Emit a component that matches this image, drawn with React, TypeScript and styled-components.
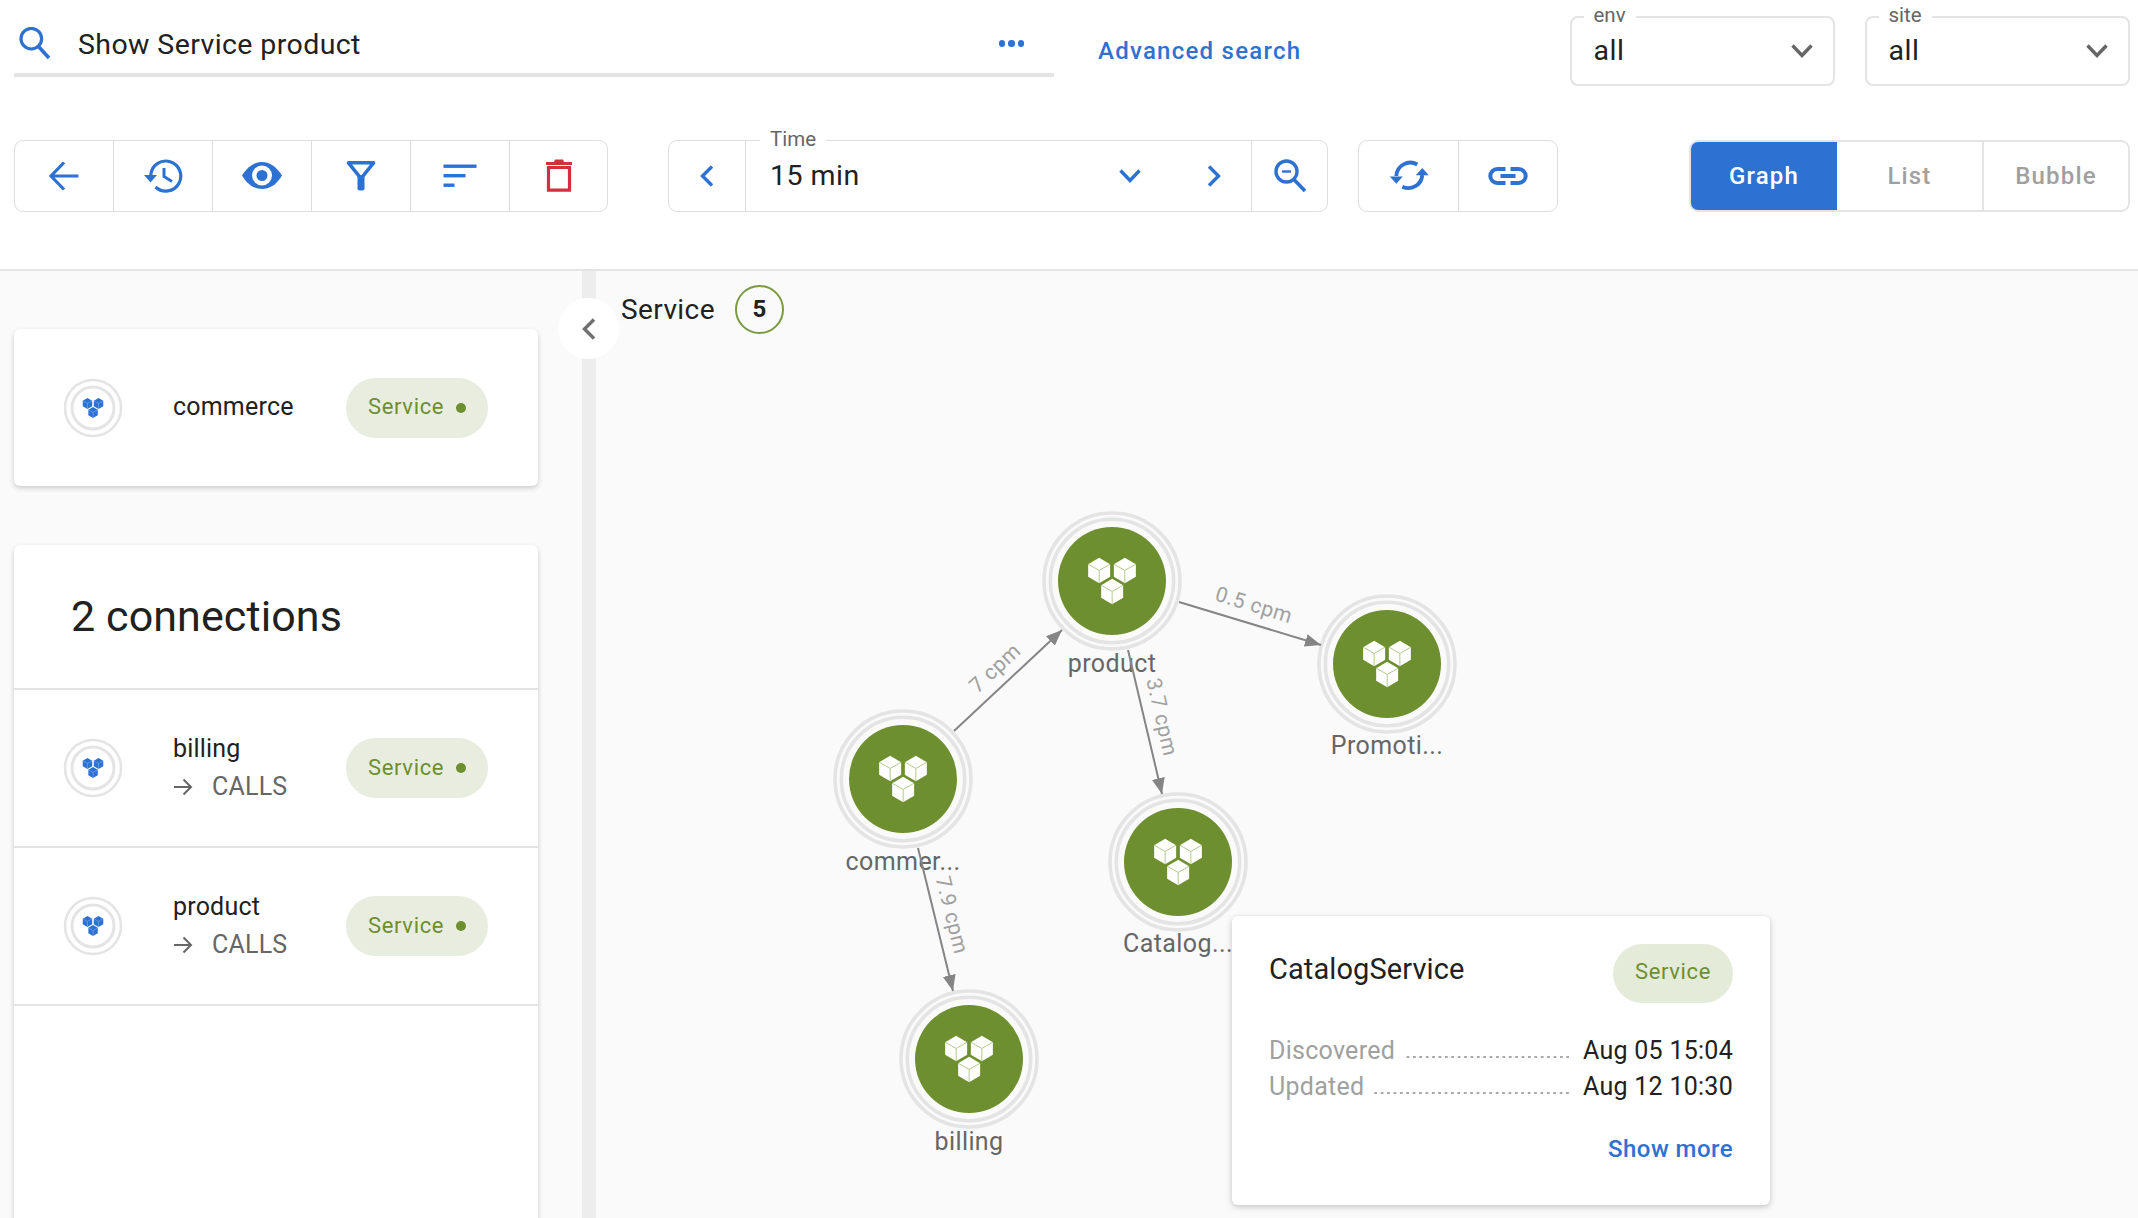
import React from "react";
import styled, { createGlobalStyle } from "styled-components";

const BLUE = "#2d72d2";
const GREEN = "#6d8f2f";
const RED = "#d32f3c";
const LINE = "#e4e4e4";

const Global = createGlobalStyle`
  html, body { margin: 0; padding: 0; background: #fff; }
  body { font-family: Roboto, "Liberation Sans", sans-serif; color: #212121; }
  #root { width: 2138px; height: 1218px; overflow: hidden; }
`;

const Page = styled.div`
  width: 2138px; height: 1218px; display: flex; flex-direction: column; overflow: hidden;
`;
const Header = styled.header`
  height: 271px; flex: none; padding: 0 8px 0 14px; box-sizing: border-box;
  border-bottom: 2px solid ${LINE};
`;
const TopRow = styled.div`
  height: 140px; display: flex; align-items: flex-start;
`;
const SearchBox = styled.div`
  width: 1040px; height: 77px; box-sizing: border-box; border-bottom: 4px solid ${LINE};
  display: flex; align-items: flex-start; padding: 27px 0 0 5px;
`;
const SearchText = styled.div`
  flex: 1; margin: 1px 0 0 27px; font-size: 28.5px; line-height: 34px; letter-spacing: 0.4px;
`;
const More = styled.div`
  display: flex; gap: 3px; margin: 13px 30px 0 0;
`;
const MoreDot = styled.span`
  width: 6.5px; height: 6.5px; border-radius: 50%; background: ${BLUE};
`;
const AdvLink = styled.a`
  margin: 34px 0 0 44px; font-size: 24px; line-height: 34px; font-weight: 500; letter-spacing: 1.25px; color: ${BLUE};
`;
const Selects = styled.div`
  margin: 0 0.5px 0 auto; display: flex; gap: 30px; padding-top: 16px;
`;
const SelectBox = styled.div`
  position: relative; width: 265px; height: 70px; box-sizing: border-box;
  border: 2px solid ${LINE}; border-radius: 8px; display: flex; align-items: center;
  justify-content: space-between; padding: 0 11px 0 22px;
`;
const FloatLabel = styled.span<{ $left: number; $top: number }>`
  position: absolute; left: ${p => p.$left}px; top: ${p => p.$top}px; padding: 0 10px; background: #fff;
  font-size: 20.5px; line-height: 24px; color: #666;
`;
const SelectValue = styled.span`
  font-size: 28.5px; line-height: 34px; letter-spacing: 0.5px;
`;
const ToolRow = styled.div`
  display: flex; height: 72px;
`;
const Group = styled.div<{ $ml: number }>`
  position: relative; display: flex; height: 72px; box-sizing: border-box; margin-left: ${p => p.$ml}px;
  border: 1px solid #dedede; border-radius: 9px; background: #fff;
`;
const Cell = styled.div<{ $w: number }>`
  width: ${p => p.$w}px; flex: none; box-sizing: border-box; display: flex; align-items: center; justify-content: center;
  & + & { border-left: 1px solid #dcdcdc; }
`;
const TimeCell = styled.div`
  width: 431px; flex: none; box-sizing: border-box; border-left: 1px solid #dcdcdc; display: flex;
  align-items: center; justify-content: space-between; padding: 0 26px 0 24px;
`;
const Tabs = styled.div`
  margin-left: auto; width: 441px; height: 72px; box-sizing: border-box; display: flex;
  border: 2px solid ${LINE}; border-radius: 9px; overflow: hidden;
`;
const Tab = styled.div<{ $active?: boolean; $divided?: boolean; $w: number }>`
  flex: none; box-sizing: border-box; width: ${p => p.$w}px; display: flex; align-items: center; justify-content: center;
  font-size: 24px; font-weight: 500; letter-spacing: 1.15px;
  background: ${p => (p.$active ? BLUE : "#fff")}; color: ${p => (p.$active ? "#fff" : "#a0a0a0")};
  border-left: ${p => (p.$divided ? `2px solid ${LINE}` : "none")};
`;

const Body = styled.main`
  flex: 1; min-height: 0; display: flex; background: #fafafa;
`;
const Sidebar = styled.aside`
  width: 582px; flex: none; box-sizing: border-box; padding: 58px 44px 0 14px; display: flex;
  flex-direction: column; gap: 59px;
`;
const Card = styled.section`
  background: #fff; border-radius: 6px; box-shadow: 0 2px 5px rgba(0,0,0,.2);
`;
const ConnCard = styled(Card)`
  flex: 1; margin-bottom: -8px;
`;
const ConnTitle = styled.h2`
  margin: 0; height: 145px; box-sizing: border-box; border-bottom: 2px solid ${LINE}; display: flex;
  align-items: center; padding: 0 0 2px 57px; font-size: 43px; font-weight: 400; letter-spacing: 0.1px; color: #212121;
`;
const Row = styled.div<{ $h: number; $line?: boolean }>`
  height: ${p => p.$h}px; box-sizing: border-box; display: flex; align-items: center; padding: 0 50px 0 49px;
  border-bottom: ${p => (p.$line ? `2px solid ${LINE}` : "none")};
`;
const RowText = styled.div<{ $lift: number }>`
  flex: 1; margin: ${p => p.$lift}px 0 0 50px; min-width: 0; display: flex; flex-direction: column; gap: 8px;
`;
const RowName = styled.div`
  font-size: 25px; line-height: 30px; letter-spacing: 0.2px;
`;
const Relation = styled.div`
  display: flex; align-items: center; gap: 19px; font-size: 25px; line-height: 30px; letter-spacing: 0.2px; color: #666;
`;
const Chip = styled.div`
  flex: none; width: 142px; height: 60px; box-sizing: border-box; border-radius: 30px; background: #e9ede0; padding: 0 0 2px 22px;
  display: flex; align-items: center; gap: 12px; font-size: 22px; letter-spacing: 0.65px; color: ${GREEN};
`;
const ChipDot = styled.span`
  width: 10px; height: 10px; margin-top: 2px; border-radius: 50%; background: ${GREEN};
`;
const Strip = styled.div`
  position: relative; width: 14px; flex: none; background: #ededed;
`;
const Collapse = styled.div`
  position: absolute; left: -24px; top: 27px; width: 61px; height: 61px; border-radius: 50%; background: #fff;
  display: flex; align-items: center; justify-content: center; z-index: 2;
`;
const Canvas = styled.div`
  position: relative; flex: 1; min-width: 0; overflow: hidden;
`;
const Heading = styled.div`
  position: relative; z-index: 1; display: flex; align-items: center; gap: 20px; padding: 14px 0 0 25px;
  font-size: 28px; line-height: 49px; letter-spacing: 0.4px;
`;
const Count = styled.span`
  width: 49px; height: 49px; box-sizing: border-box; border: 2.5px solid #7a9a42; border-radius: 50%;
  display: flex; align-items: center; justify-content: center; font-size: 24px; font-weight: 700; letter-spacing: 0;
`;
const GraphSvg = styled.svg`
  position: absolute; left: 0; top: 0;
`;
const NodeLabel = styled.text`
  font-family: Roboto, sans-serif; font-size: 25px; fill: #666; text-anchor: middle; letter-spacing: 0.4px;
`;
const EdgeLabel = styled.text`
  font-family: Roboto, sans-serif; font-size: 21px; fill: #a0a0a0; text-anchor: middle; letter-spacing: 0.55px;
`;
const Tip = styled.div`
  position: absolute; left: 636px; top: 645px; width: 538px; height: 289px; box-sizing: border-box; padding: 28px 37px 0 37px;
  background: #fff; border-radius: 6px; box-shadow: 0 2px 6px rgba(0,0,0,.22); z-index: 3;
`;
const TipHead = styled.div`
  display: flex; justify-content: space-between; align-items: flex-start;
`;
const TipTitle = styled.div`
  margin-top: 8px; font-size: 29px; line-height: 34px; letter-spacing: 0.1px;
`;
const TipChip = styled.div`
  width: 120px; height: 59px; box-sizing: border-box; padding-bottom: 4px; border-radius: 30px; background: #e5ebd9; display: flex; align-items: center; justify-content: center;
  font-size: 22px; letter-spacing: 0.65px; color: ${GREEN};
`;
const TipRows = styled.div`
  margin-top: 29px;
`;
const TipRow = styled.div`
  height: 36px; display: flex; align-items: center; font-size: 25px; letter-spacing: 0.27px;
`;
const TipKey = styled.span`
  color: #a0a0a0; flex: none;
`;
const Leader = styled.span`
  flex: 1; min-width: 0; align-self: stretch; margin: 0 12px 0 10px;
  background-image: radial-gradient(circle at center, #a8a8a8 1.1px, transparent 1.5px);
  background-size: 6.4px 6px; background-position: right top 22px; background-repeat: repeat-x;
`;
const TipValue = styled.span`
  flex: none;
`;
const TipMore = styled.a`
  display: block; margin-top: 30px; text-align: right; font-size: 24px; line-height: 30px; font-weight: 500; letter-spacing: 0.45px; color: ${BLUE};
`;
const IconSvg = styled.svg`
  display: block; flex: none;
`;

const Ico: React.FC<{ s?: number; children: React.ReactNode }> = ({ s = 40, children }) => (
  <IconSvg width={s} height={s} viewBox="0 0 40 40" fill="none">{children}</IconSvg>
);

const Chevron: React.FC<{ dir: "l" | "r" | "d"; color?: string }> = ({ dir, color = BLUE }) => {
  const d = dir === "l" ? "M25 10.5 L15.5 20 L25 29.5" : dir === "r" ? "M15 10.5 L24.5 20 L15 29.5" : "M10.5 14.5 L20 24.5 L29.5 14.5";
  return <Ico><path d={d} stroke={color} strokeWidth={3.4} /></Ico>;
};

const Cube: React.FC<{ x: number; y: number; fill: string; line: string; sw: number }> = ({ x, y, fill, line, sw }) => (
  <g transform={`translate(${x} ${y})`}>
    <path d="M11 0 L22 6.3 V19 L11 25.3 L0 19 V6.3Z" fill={fill} />
    <path d="M0 6.3 L11 12.6 L22 6.3 M11 12.6 V25.3" stroke={line} strokeWidth={sw} fill="none" />
  </g>
);
const Cubes: React.FC<{ cx: number; cy: number; k: number; fill: string; line: string; sw: number }> = ({ cx, cy, k, fill, line, sw }) => (
  <g transform={`translate(${cx} ${cy}) scale(${k}) translate(-23.85 -23.15)`}>
    <Cube x={0} y={0} fill={fill} line={line} sw={sw} />
    <Cube x={25.7} y={0} fill={fill} line={line} sw={sw} />
    <Cube x={13} y={21} fill={fill} line={line} sw={sw} />
  </g>
);

const EntityIcon = () => (
  <IconSvg width={60} height={60} viewBox="0 0 60 60" fill="none">
    <circle cx="30" cy="30" r="28" stroke="#e4e4e4" strokeWidth="2.5" />
    <circle cx="30" cy="30" r="21" stroke="#e4e4e4" strokeWidth="3" />
    <Cubes cx={30} cy={30} k={0.43} fill={BLUE} line="#8fb6ec" sw={1.2} />
  </IconSvg>
);

const Badge: React.FC = () => (
  <Chip>Service<ChipDot /></Chip>
);

const ArrowRight = () => (
  <IconSvg width={20} height={20} viewBox="0 0 20 20" fill="none">
    <path d="M1 10 H18 M10.5 2.5 L18 10 L10.5 17.5" stroke="#666" strokeWidth="2" />
  </IconSvg>
);

const nodes = [
  { x: 1112, y: 581, label: "product", ly: 672 },
  { x: 1387, y: 664, label: "Promoti...", ly: 754 },
  { x: 903, y: 779, label: "commer...", ly: 870 },
  { x: 1178, y: 862, label: "Catalog...", ly: 952 },
  { x: 969, y: 1059, label: "billing", ly: 1150 },
];
const edges = [
  { d: "M954 731 L1062 630" },
  { d: "M1179 602 L1321 645" },
  { d: "M1128 650 L1162 794" },
  { d: "M918 848 L953 991" },
];
const edgeLabels = [
  { t: "7 cpm", x: 995, y: 675, r: -43, cx: 995, cy: 668 },
  { t: "0.5 cpm", x: 1254, y: 612, r: 17, cx: 1254, cy: 605 },
  { t: "3.7 cpm", x: 1162, y: 724, r: 77, cx: 1162, cy: 717 },
  { t: "7.9 cpm", x: 952, y: 922, r: 76, cx: 952, cy: 915 },
];

const SearchIcon = () => (
  <IconSvg width={32} height={32} viewBox="0 0 32 32" fill="none">
    <circle cx="12.3" cy="11.7" r="10.3" stroke={BLUE} strokeWidth="3.2" />
    <path d="M19.5 19.5 L30 31" stroke={BLUE} strokeWidth="3.6" />
  </IconSvg>
);

const rows = [
  { name: "billing" },
  { name: "product" },
];

export default function App() {
  return (
    <Page>
      <Global />
      <Header>
        <TopRow>
          <SearchBox>
            <SearchIcon />
            <SearchText>Show Service product</SearchText>
            <More><MoreDot /><MoreDot /><MoreDot /></More>
          </SearchBox>
          <AdvLink>Advanced search</AdvLink>
          <Selects>
            <SelectBox>
              <FloatLabel $left={12} $top={-15}>env</FloatLabel>
              <SelectValue>all</SelectValue>
              <Chevron dir="d" color="#666" />
            </SelectBox>
            <SelectBox>
              <FloatLabel $left={12} $top={-15}>site</FloatLabel>
              <SelectValue>all</SelectValue>
              <Chevron dir="d" color="#666" />
            </SelectBox>
          </Selects>
        </TopRow>
        <ToolRow>
          <Group $ml={0}>
            <Cell $w={98}>
              <Ico><path d="M34.5 20 H7 M20 6.5 L7 20 L20 33.5" stroke={BLUE} strokeWidth="3.2" /></Ico>
            </Cell>
            <Cell $w={99}>
              <Ico>
                <path d="M7.8 19 A15 15 0 1 1 12.5 31" stroke={BLUE} strokeWidth="3.2" />
                <path d="M1 19 H14 L7.5 26.5Z" fill={BLUE} />
                <path d="M21 12 V20.5 L29 25.5" stroke={BLUE} strokeWidth="3" />
              </Ico>
            </Cell>
            <Cell $w={99}>
              <Ico>
                <path d="M0 19.5 C6 10 13 6 20 6 C27 6 34 10 40 19.5 C34 29.5 27 33 20 33 C13 33 6 29.5 0 19.5Z" fill={BLUE} />
                <circle cx="20" cy="19.5" r="10" fill="#fff" />
                <circle cx="20" cy="19.5" r="5.5" fill={BLUE} />
              </Ico>
            </Cell>
            <Cell $w={99}>
              <Ico>
                <path d="M7.5 6.8 H32.5 L20 22.5Z" stroke={BLUE} strokeWidth="3.6" strokeLinejoin="round" />
                <rect x="16.5" y="19" width="7" height="15.5" rx="2" fill={BLUE} />
              </Ico>
            </Cell>
            <Cell $w={99}>
              <Ico>
                <rect x="3.5" y="8.5" width="33" height="3.4" fill={BLUE} />
                <rect x="3.5" y="18" width="22" height="3.4" fill={BLUE} />
                <rect x="3.5" y="27.5" width="11" height="3.4" fill={BLUE} />
              </Ico>
            </Cell>
            <Cell $w={98}>
              <Ico>
                <path d="M7 6 H15 L16 3.4 H24 L25 6 H33 V9 H7Z" fill={RED} />
                <path d="M9.5 11 V34.2 H30.5 V11" stroke={RED} strokeWidth="3.2" />
                <path d="M8 11.5 H32" stroke={RED} strokeWidth="3" />
              </Ico>
            </Cell>
          </Group>
          <Group $ml={60}>
            <Cell $w={76}><Chevron dir="l" /></Cell>
            <FloatLabel $left={91} $top={-14}>Time</FloatLabel>
            <TimeCell>
              <SelectValue>15 min</SelectValue>
              <Chevron dir="d" />
            </TimeCell>
            <Cell $w={75}><Chevron dir="r" /></Cell>
            <Cell $w={76}>
              <Ico>
                <circle cx="16.5" cy="15.5" r="10.5" stroke={BLUE} strokeWidth="3.4" />
                <path d="M24 23.5 L35 35" stroke={BLUE} strokeWidth="3.6" />
                <path d="M12 15.5 H21" stroke={BLUE} strokeWidth="2.4" />
              </Ico>
            </Cell>
          </Group>
          <Group $ml={30}>
            <Cell $w={99}>
              <Ico>
                <path d="M28.3 8.5 A14 14 0 0 0 7.3 20" stroke={BLUE} strokeWidth="3.8" />
                <path d="M0.8 20.5 H13.8 L7.3 27.8Z" fill={BLUE} />
                <path d="M13.3 30.7 A14 14 0 0 0 33.3 19" stroke={BLUE} strokeWidth="3.8" />
                <path d="M26.8 19.2 H39.8 L33.3 12Z" fill={BLUE} />
              </Ico>
            </Cell>
            <Cell $w={99}>
              <Ico>
                <path d="M17.5 13 H9.3 A7 7 0 0 0 9.3 27 H17.5" stroke={BLUE} strokeWidth="4" />
                <path d="M22.5 13 H30.7 A7 7 0 0 1 30.7 27 H22.5" stroke={BLUE} strokeWidth="4" />
                <rect x="12.5" y="18" width="15" height="4" fill={BLUE} />
              </Ico>
            </Cell>
          </Group>
          <Tabs>
            <Tab $active $w={146}>Graph</Tab>
            <Tab $w={145}>List</Tab>
            <Tab $divided $w={146}>Bubble</Tab>
          </Tabs>
        </ToolRow>
      </Header>
      <Body>
        <Sidebar>
          <Card>
            <Row $h={157}>
              <EntityIcon />
              <RowText $lift={-2}><RowName>commerce</RowName></RowText>
              <Badge />
            </Row>
          </Card>
          <ConnCard>
            <ConnTitle>2 connections</ConnTitle>
            {rows.map(r => (
              <Row key={r.name} $h={158} $line>
                <EntityIcon />
                <RowText $lift={0}>
                  <RowName>{r.name}</RowName>
                  <Relation><ArrowRight />CALLS</Relation>
                </RowText>
                <Badge />
              </Row>
            ))}
          </ConnCard>
        </Sidebar>
        <Strip>
          <Collapse>
            <Chevron dir="l" color="#707070" />
          </Collapse>
        </Strip>
        <Canvas>
          <GraphSvg width={1542} height={947} viewBox="596 271 1542 947" fill="none">
            <defs>
              <marker id="head" markerUnits="userSpaceOnUse" markerWidth="18" markerHeight="14" refX="16" refY="6.5" orient="auto">
                <path d="M0 0 L16 6.5 L0 13Z" fill="#858585" />
              </marker>
            </defs>
            {nodes.map(n => (
              <g key={n.label}>
                <circle cx={n.x} cy={n.y} r={68} stroke="#e4e4e4" strokeWidth={3.6} />
                <circle cx={n.x} cy={n.y} r={61.7} stroke="#e4e4e4" strokeWidth={3.6} />
                <circle cx={n.x} cy={n.y} r={54} fill={GREEN} />
                <Cubes cx={n.x} cy={n.y} k={1} fill="#fff" line="#a9c47e" sw={0.9} />
                <NodeLabel x={n.x} y={n.ly}>{n.label}</NodeLabel>
              </g>
            ))}
            {edges.map(e => (
              <path key={e.d} d={e.d} stroke="#858585" strokeWidth={2} markerEnd="url(#head)" />
            ))}
            {edgeLabels.map(l => (
              <EdgeLabel key={l.t} x={l.x} y={l.y} transform={`rotate(${l.r} ${l.cx} ${l.cy})`}>{l.t}</EdgeLabel>
            ))}
          </GraphSvg>
          <Heading>Service<Count>5</Count></Heading>
          <Tip>
            <TipHead>
              <TipTitle>CatalogService</TipTitle>
              <TipChip>Service</TipChip>
            </TipHead>
            <TipRows>
              <TipRow>
                <TipKey>Discovered</TipKey>
                <Leader />
                <TipValue>Aug 05 15:04</TipValue>
              </TipRow>
              <TipRow>
                <TipKey>Updated</TipKey>
                <Leader />
                <TipValue>Aug 12 10:30</TipValue>
              </TipRow>
            </TipRows>
            <TipMore>Show more</TipMore>
          </Tip>
        </Canvas>
      </Body>
    </Page>
  );
}
